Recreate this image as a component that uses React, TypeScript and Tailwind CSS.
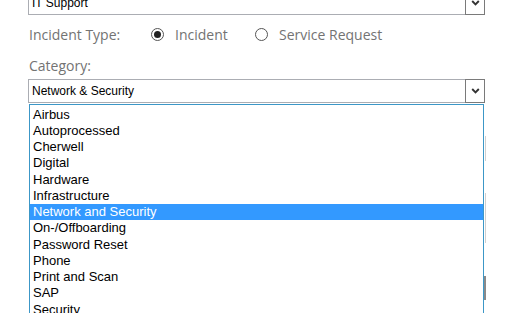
import React from "react";

const items = [
  "Airbus",
  "Autoprocessed",
  "Cherwell",
  "Digital",
  "Hardware",
  "Infrastructure",
  "Network and Security",
  "On-/Offboarding",
  "Password Reset",
  "Phone",
  "Print and Scan",
  "SAP",
  "Security",
  "Software",
];

function Chevron() {
  return (
    <svg width="9" height="6" viewBox="0 0 9 6">
      <path d="M1.2 1 L4.5 4.3 L7.8 1" fill="none" stroke="#333" strokeWidth="1.9" />
    </svg>
  );
}

function Select({ value }: { value: string }) {
  return (
    <div className="relative h-[24px] w-[457px] border border-[#abadb3] bg-white flex items-center pl-[3px] text-[12px] text-black">
      <span className="font-['Liberation_Sans',Arial,sans-serif] leading-none">{value}</span>
      <div className="absolute right-[-1px] top-[-1px] bottom-[-1px] w-[20px] border border-[#7a7a7a] bg-white flex items-center justify-center">
        <Chevron />
      </div>
    </div>
  );
}

function Radio({ checked }: { checked: boolean }) {
  return (
    <div className="w-[13px] h-[13px] rounded-full border border-[#555] flex items-center justify-center bg-white">
      {checked && <div className="w-[7px] h-[7px] rounded-full bg-[#222]" />}
    </div>
  );
}

export default function App() {
  return (
    <div className="relative w-[507px] h-[313px] overflow-hidden bg-white">
      <div className="pl-[28px] mt-[-9px] font-['Open_Sans',sans-serif] text-[#737373]">
        <Select value="IT Support" />
        <div className="mt-[7px] h-[24px] flex items-center text-[14px]">
          <span className="w-[123px] pl-[1px]">Incident Type:</span>
          <Radio checked />
          <span className="ml-[11px] w-[80px]">Incident</span>
          <Radio checked={false} />
          <span className="ml-[11px]">Service Request</span>
        </div>
        <div className="mt-[9px] h-[20px] flex items-center text-[14px] pl-[1px]">Category:</div>
        <div className="mt-[4px]">
          <Select value="Network & Security" />
        </div>
        <div className="mt-[33px] flex flex-col items-end w-[458px]">
          <div className="h-[25px] w-[3px] border-r border-[#d0d0d0]" />
          <div className="mt-[32px] h-[50px] w-[3px] border-r border-[#d0d0d0]" />
          <div className="mt-[33px] h-[24px] w-[3px] border-r-2 border-[#8a8a8a]" />
        </div>
      </div>
      <div className="absolute left-[29px] top-[104px] w-[455px] h-[230px] border border-[#3c97c7] bg-white pt-[1px] font-['Liberation_Sans',Arial,sans-serif] text-[13px] text-black">
        {items.map((it) => (
          <div
            key={it}
            className={
              "h-[16.25px] flex items-center pl-[3px] leading-none " +
              (it === "Network and Security" ? "bg-[#3399ff] text-white" : "")
            }
          >
            {it}
          </div>
        ))}
      </div>
    </div>
  );
}
